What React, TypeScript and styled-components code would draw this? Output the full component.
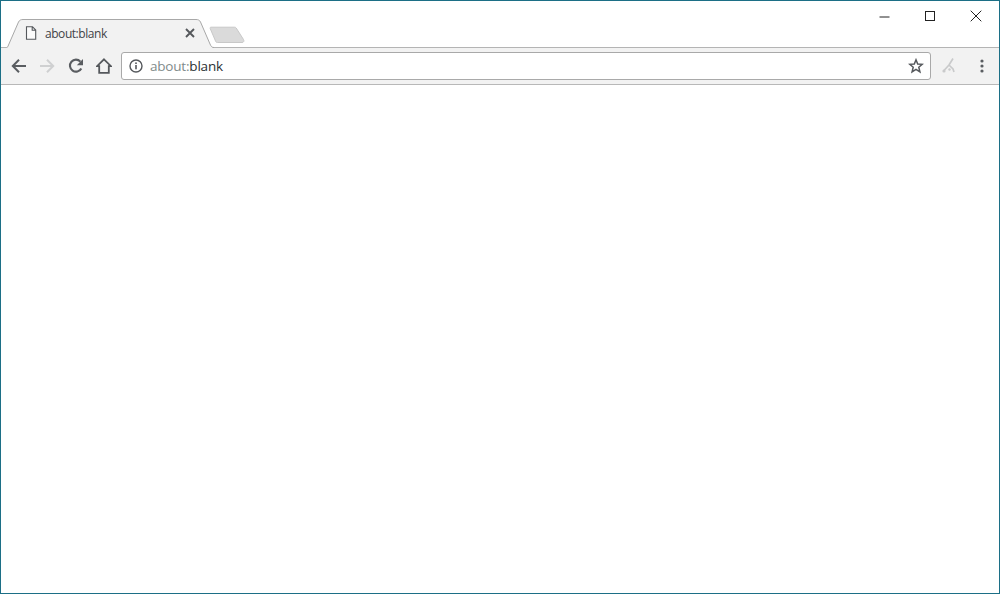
import React from "react";
import styled, { createGlobalStyle } from "styled-components";

const Global = createGlobalStyle`
  html, body { margin: 0; padding: 0; background: #fff; }
  * { box-sizing: border-box; }
`;

const Win = styled.div`
  width: 1000px;
  height: 594px;
  border: 1px solid #1c6f86;
  background: #fff;
  display: flex;
  flex-direction: column;
  font-family: "Open Sans", "Noto Sans", sans-serif;
  overflow: hidden;
`;

const TitleBar = styled.div`
  height: 47px;
  flex: none;
  display: flex;
  justify-content: space-between;
  align-items: flex-start;
  border-bottom: 1px solid #b4b4b4;
`;

const Tabs = styled.div`
  display: flex;
  align-items: flex-end;
  height: 47px;
  padding-left: 5px;
`;

const Tab = styled.div`
  position: relative;
  width: 208px;
  height: 29px;
  margin-top: 18px;
  display: flex;
  align-items: center;
  padding: 0 19px 1px 19px;
  z-index: 1;
`;

const TabShape = styled.svg`
  position: absolute;
  left: 0;
  top: 0;
`;

const TabIcon = styled.svg`
  position: relative;
  flex: none;
  margin-right: 8px;
`;

const TabTitle = styled.span`
  position: relative;
  flex: 1;
  font-size: 12px;
  color: #3f4347;
  letter-spacing: -0.45px;
`;

const TabClose = styled.svg`
  position: relative;
  flex: none;
`;

const NewTab = styled.svg`
  flex: none;
  margin: 0 0 3px -5px;
`;

const Controls = styled.div`
  display: flex;
  padding-top: 4px;
`;

const Control = styled.div`
  width: 46px;
  height: 22px;
  display: flex;
  align-items: center;
  justify-content: center;
`;

const Toolbar = styled.div`
  height: 37px;
  flex: none;
  background: #f2f2f2;
  border-bottom: 1px solid #b8b8b8;
  display: flex;
  align-items: center;
  padding: 0 0 1px 4px;
`;

const NavButton = styled.div<{ $w?: number }>`
  width: ${(p) => p.$w ?? 28}px;
  height: 28px;
  flex: none;
  display: flex;
  align-items: center;
  justify-content: center;
`;

const Omnibox = styled.div`
  flex: 1;
  height: 28px;
  margin: 0 3px 0 3px;
  background: #fff;
  border: 1px solid #a9a9a9;
  border-radius: 3px;
  display: flex;
  align-items: center;
  padding: 0 6px 0 7px;
`;

const Url = styled.div`
  flex: 1;
  margin-left: 7px;
  font-size: 13.5px;
  letter-spacing: -0.2px;
  color: #7f8b8b;
`;

const UrlPath = styled.span`
  color: #2b2f33;
`;

const InfoIcon = styled.svg`
  flex: none;
`;

const Content = styled.div`
  flex: 1;
  background: #fff;
`;

export default function App() {
  return (
    <Win>
      <Global />
      <TitleBar>
        <Tabs>
          <Tab>
            <TabShape width="208" height="29" viewBox="0 0 208 29">
              <path d="M0 29 C1.5 28.5 2 27.5 2.5 26 L12.5 3 C13.5 1 15 0.5 17 0.5 L190 0.5 C192 0.5 193.5 1 194.5 3 L204 25 C205 27.5 206 28.5 208 29 Z" fill="#f2f2f2" />
              <path d="M0.5 28.5 C1.5 28.5 2 27.5 2.5 26 L12.5 3 C13.5 1 15 0.5 17 0.5 L190 0.5 C192 0.5 193.5 1 194.5 3 L204 25 C205 27.5 206 28.5 208 28.5" fill="none" stroke="#a8a8a8" />
            </TabShape>
            <TabIcon width="12" height="14" viewBox="0 0 12 14">
              <path d="M1.5 0.7 H7.5 L10.7 4 V13.3 H1.5 Z M7.2 0.9 V4.3 H10.5" fill="#fbfbfb" stroke="#55585c" strokeWidth="1.1" />
            </TabIcon>
            <TabTitle>about:blank</TabTitle>
            <TabClose width="10" height="10" viewBox="0 0 10 10">
              <path d="M1 1 L9 9 M9 1 L1 9" stroke="#55585c" strokeWidth="1.9" />
            </TabClose>
          </Tab>
          <NewTab width="36" height="19" viewBox="0 0 36 19">
            <path d="M2 1.2 H25.5 C26.3 1.2 26.8 1.5 27.2 2 L34.5 13.5 C35.3 15 34.8 16.5 33 16.5 H8.5 C7.4 16.5 6.8 16 6.5 15 L1.2 2.5 C0.9 1.7 1.3 1.2 2 1.2 Z" fill="#dadada" stroke="#c8c8c8" />
          </NewTab>
        </Tabs>
        <Controls>
          <Control>
            <svg width="11" height="11" viewBox="0 0 11 11"><path d="M0.5 6 H10.5" stroke="#222" strokeWidth="1" /></svg>
          </Control>
          <Control>
            <svg width="11" height="11" viewBox="0 0 11 11"><rect x="0.5" y="0.5" width="9" height="9" fill="none" stroke="#222" /></svg>
          </Control>
          <Control>
            <svg width="12" height="12" viewBox="0 0 12 12"><path d="M0.7 0.7 L11.3 11.3 M11.3 0.7 L0.7 11.3" stroke="#222" strokeWidth="1" /></svg>
          </Control>
        </Controls>
      </TitleBar>
      <Toolbar>
        <NavButton>
          <svg width="16" height="16" viewBox="0 0 16 16"><path d="M15 8 H2 M8 1.8 L1.8 8 L8 14.2" fill="none" stroke="#5a5d61" strokeWidth="2" /></svg>
        </NavButton>
        <NavButton>
          <svg width="16" height="16" viewBox="0 0 16 16"><path d="M1 8 H14 M8 1.8 L14.2 8 L8 14.2" fill="none" stroke="#cfd0d1" strokeWidth="2" /></svg>
        </NavButton>
        <NavButton $w={29}>
          <svg width="16" height="16" viewBox="0 0 16 16">
            <path d="M13.3 10.4 A6 6 0 1 1 12.4 3.6" fill="none" stroke="#5a5d61" strokeWidth="2.1" />
            <path d="M15 1 V7.2 H8.8 Z" fill="#5a5d61" />
          </svg>
        </NavButton>
        <NavButton>
          <svg width="16" height="16" viewBox="0 0 16 16"><path d="M8 1.3 L15 8.2 H12.8 V14.9 H3.2 V8.2 H1 Z" fill="none" stroke="#55585c" strokeWidth="1.8" strokeLinejoin="miter" /></svg>
        </NavButton>
        <Omnibox>
          <InfoIcon width="14" height="14" viewBox="0 0 14 14">
            <circle cx="7" cy="7" r="6" fill="none" stroke="#55585c" strokeWidth="1.4" />
            <rect x="6.2" y="6" width="1.6" height="4.3" fill="#55585c" />
            <rect x="6.2" y="3.4" width="1.6" height="1.6" fill="#55585c" />
          </InfoIcon>
          <Url>about:<UrlPath>blank</UrlPath></Url>
          <svg width="16" height="16" viewBox="0 0 16 16">
            <path d="M8 1.8 L9.7 6 L14.3 6.3 L10.8 9.2 L11.9 13.8 L8 11.3 L4.1 13.8 L5.2 9.2 L1.7 6.3 L6.3 6 Z" fill="none" stroke="#55585c" strokeWidth="1.5" />
          </svg>
        </Omnibox>
        <NavButton $w={30}>
          <svg width="16" height="16" viewBox="0 0 16 16">
            <path d="M12 0.5 L8 7 L2.5 13 M8 7 L12 11 L13 14" fill="none" stroke="#c9cacb" strokeWidth="1.7" />
            <circle cx="3" cy="13" r="1.6" fill="#c9cacb" />
            <circle cx="8.5" cy="11.5" r="1.2" fill="#c9cacb" />
          </svg>
        </NavButton>
        <NavButton $w={35}>
          <svg width="4" height="14" viewBox="0 0 4 14">
            <circle cx="2" cy="2" r="1.6" fill="#5a5d61" />
            <circle cx="2" cy="7" r="1.6" fill="#5a5d61" />
            <circle cx="2" cy="12" r="1.6" fill="#5a5d61" />
          </svg>
        </NavButton>
      </Toolbar>
      <Content />
    </Win>
  );
}
